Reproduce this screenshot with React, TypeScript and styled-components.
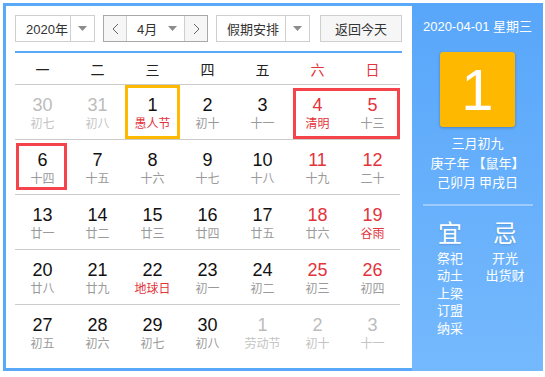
import { FC } from 'react';
import styled, { createGlobalStyle } from 'styled-components';

const GlobalStyle = createGlobalStyle`
  body {
    margin: 0;
    background: #fff;
    font-family: 'Liberation Sans', 'Noto Sans CJK SC', sans-serif;
  }
`;

type Kind = 'normal' | 'weekend' | 'other';
type Mark = 'none' | 'today' | 'restL' | 'restR' | 'rest';

interface Day {
  d: number;
  l: string;
  kind?: Kind;
  fest?: boolean;
  mark?: Mark;
}

const weeks: Day[][] = [
  [
    { d: 30, l: '初七', kind: 'other' },
    { d: 31, l: '初八', kind: 'other' },
    { d: 1, l: '愚人节', fest: true, mark: 'today' },
    { d: 2, l: '初十' },
    { d: 3, l: '十一' },
    { d: 4, l: '清明', kind: 'weekend', fest: true, mark: 'restL' },
    { d: 5, l: '十三', kind: 'weekend', mark: 'restR' },
  ],
  [
    { d: 6, l: '十四', mark: 'rest' },
    { d: 7, l: '十五' },
    { d: 8, l: '十六' },
    { d: 9, l: '十七' },
    { d: 10, l: '十八' },
    { d: 11, l: '十九', kind: 'weekend' },
    { d: 12, l: '二十', kind: 'weekend' },
  ],
  [
    { d: 13, l: '廿一' },
    { d: 14, l: '廿二' },
    { d: 15, l: '廿三' },
    { d: 16, l: '廿四' },
    { d: 17, l: '廿五' },
    { d: 18, l: '廿六', kind: 'weekend' },
    { d: 19, l: '谷雨', kind: 'weekend', fest: true },
  ],
  [
    { d: 20, l: '廿八' },
    { d: 21, l: '廿九' },
    { d: 22, l: '地球日', fest: true },
    { d: 23, l: '初一' },
    { d: 24, l: '初二' },
    { d: 25, l: '初三', kind: 'weekend' },
    { d: 26, l: '初四', kind: 'weekend' },
  ],
  [
    { d: 27, l: '初五' },
    { d: 28, l: '初六' },
    { d: 29, l: '初七' },
    { d: 30, l: '初八' },
    { d: 1, l: '劳动节', kind: 'other' },
    { d: 2, l: '初十', kind: 'other' },
    { d: 3, l: '十一', kind: 'other' },
  ],
];

const weekNames = ['一', '二', '三', '四', '五', '六', '日'];
const yiList = ['祭祀', '动土', '上梁', '订盟', '纳采'];
const jiList = ['开光', '出货财'];

const Caret: FC = () => (
  <svg width="9" height="5" viewBox="0 0 9 5">
    <path d="M0 0 L9 0 L4.5 5 Z" fill="#8c8c8c" />
  </svg>
);

const Chevron: FC<{ dir: 'l' | 'r' }> = ({ dir }) => (
  <svg width="7" height="12" viewBox="0 0 7 12">
    <path
      d={dir === 'l' ? 'M6 1 L1 6 L6 11' : 'M1 1 L6 6 L1 11'}
      fill="none"
      stroke="#666"
      strokeWidth="1"
    />
  </svg>
);

const App: FC = () => {
  return (
    <>
      <GlobalStyle />
      <Frame>
        <Main>
          <Toolbar>
            <Select width={80}>
              <SelectText>2020年</SelectText>
              <CaretBox>
                <Caret />
              </CaretBox>
            </Select>
            <MonthGroup>
              <NavButton>
                <Chevron dir="l" />
              </NavButton>
              <MonthSelect>
                <span>4月</span>
                <Caret />
              </MonthSelect>
              <NavButton>
                <Chevron dir="r" />
              </NavButton>
            </MonthGroup>
            <Select width={94}>
              <SelectText>假期安排</SelectText>
              <CaretBox>
                <Caret />
              </CaretBox>
            </Select>
            <TodayButton>返回今天</TodayButton>
          </Toolbar>
          <BlueLine />
          <Grid>
            <HeadRow>
              {weekNames.map((w, i) => (
                <HeadCell key={w} red={i >= 5}>
                  {w}
                </HeadCell>
              ))}
            </HeadRow>
            {weeks.map((week, wi) => (
              <WeekRow key={wi} last={wi === weeks.length - 1}>
                {week.map((day, di) => (
                  <DayCell key={di} mark={day.mark || 'none'}>
                    <DayNum kind={day.kind || 'normal'}>{day.d}</DayNum>
                    <Lunar
                      kind={day.kind || 'normal'}
                      fest={!!day.fest}
                    >
                      {day.l}
                    </Lunar>
                  </DayCell>
                ))}
              </WeekRow>
            ))}
          </Grid>
        </Main>
        <Side>
          <SideDate>2020-04-01 星期三</SideDate>
          <BigDay>1</BigDay>
          <SideInfo>
            <div>三月初九</div>
            <div>庚子年 【鼠年】</div>
            <div>己卯月 甲戌日</div>
          </SideInfo>
          <SideLine />
          <Advice>
            <AdviceCol>
              <AdviceTitle>宜</AdviceTitle>
              {yiList.map((t) => (
                <AdviceItem key={t}>{t}</AdviceItem>
              ))}
            </AdviceCol>
            <AdviceCol>
              <AdviceTitle>忌</AdviceTitle>
              {jiList.map((t) => (
                <AdviceItem key={t}>{t}</AdviceItem>
              ))}
            </AdviceCol>
          </Advice>
        </Side>
      </Frame>
    </>
  );
};

export default App;

const Frame = styled.div`
  margin: 3px 0 0 3px;
  width: 540px;
  height: 368px;
  display: flex;
`;

const Main = styled.div`
  width: 409px;
  flex-shrink: 0;
  box-sizing: border-box;
  border: 3px solid #5aa8f8;
  border-right: none;
  padding: 9px 0 0 9px;
`;

const Toolbar = styled.div`
  display: flex;
  height: 27px;
  font-size: 13px;
  color: #333;
  white-space: nowrap;
  font-family: 'Liberation Sans', 'Noto Sans CJK SC', sans-serif;
`;

const Select = styled.div<{ width: number }>`
  width: ${(p) => p.width}px;
  box-sizing: border-box;
  border: 1px solid #cfcfcf;
  display: flex;
  margin-right: 8px;
  background: #fff;
`;

const SelectText = styled.div`
  flex: 1;
  display: flex;
  align-items: center;
  padding-left: 10px;
  border-right: 1px solid #cfcfcf;
`;

const CaretBox = styled.div`
  width: 23px;
  flex-shrink: 0;
  display: flex;
  align-items: center;
  justify-content: center;
`;

const MonthGroup = styled.div`
  width: 105px;
  box-sizing: border-box;
  border: 1px solid #a8a8a8;
  display: flex;
  margin-right: 8px;
`;

const NavButton = styled.div`
  width: 22px;
  display: flex;
  align-items: center;
  justify-content: center;
  background: #f6f6f6;
`;

const MonthSelect = styled.div`
  flex: 1;
  display: flex;
  align-items: center;
  justify-content: space-between;
  padding: 0 7px 0 10px;
  border-left: 1px solid #cfcfcf;
  border-right: 1px solid #cfcfcf;
`;

const TodayButton = styled.div`
  width: 82px;
  margin-left: 2px;
  box-sizing: border-box;
  border: 1px solid #cfcfcf;
  background: #f6f6f6;
  display: flex;
  align-items: center;
  justify-content: center;
`;

const BlueLine = styled.div`
  width: 387px;
  height: 2px;
  margin-top: 9px;
  background: #5aa8f8;
`;

const Grid = styled.div`
  width: 385px;
  display: flex;
  flex-direction: column;
`;

const HeadRow = styled.div`
  display: flex;
  height: 31px;
  border-bottom: 1px solid #cccccc;
`;

const HeadCell = styled.div<{ red: boolean }>`
  flex: 1;
  display: flex;
  align-items: center;
  justify-content: center;
  font-family: 'Noto Sans CJK SC', sans-serif;
  font-size: 14px;
  color: ${(p) => (p.red ? '#e3333b' : '#222')};
`;

const WeekRow = styled.div<{ last: boolean }>`
  display: flex;
  height: 54px;
  border-bottom: 1px solid ${(p) => (p.last ? 'transparent' : '#cccccc')};
`;

const markBox: Record<Mark, string> = {
  none: 'display: none;',
  today: 'top: 0; left: 0; right: 0; bottom: 0; border: 3px solid #ffb900;',
  restL:
    'top: 3px; left: 3px; right: 0; bottom: 0; border: 3px solid #f4434a; border-right: none;',
  restR:
    'top: 3px; left: 0; right: 0; bottom: 0; border: 3px solid #f4434a; border-left: none;',
  rest: 'top: 3px; left: 1px; right: 3px; bottom: 4px; border: 3px solid #f4434a;',
};

const DayCell = styled.div<{ mark: Mark }>`
  flex: 1;
  position: relative;
  display: flex;
  flex-direction: column;
  align-items: center;
  padding-top: 10px;
  box-sizing: border-box;

  &::before {
    content: '';
    position: absolute;
    ${(p) => markBox[p.mark]}
  }
`;

const numColor: Record<Kind, string> = {
  normal: '#111',
  weekend: '#e3333b',
  other: '#bcbcbc',
};

const DayNum = styled.div<{ kind: Kind }>`
  font-family: 'Liberation Sans', sans-serif;
  font-size: 18px;
  line-height: 20px;
  color: ${(p) => numColor[p.kind]};
`;

const Lunar = styled.div<{ kind: Kind; fest: boolean }>`
  font-family: 'Noto Sans CJK SC', sans-serif;
  font-size: 12px;
  line-height: 15px;
  color: ${(p) =>
    p.kind === 'other' ? '#c4c4c4' : p.fest ? '#e3333b' : '#9a9a9a'};
`;

const Side = styled.div`
  flex: 1;
  background: linear-gradient(#58a6fa, #75b9fd);
  color: #fff;
  display: flex;
  flex-direction: column;
  align-items: center;
  font-family: 'Liberation Sans', 'Noto Sans CJK SC', sans-serif;
`;

const SideDate = styled.div`
  margin-top: 15px;
  font-size: 13px;
  line-height: 18px;
`;

const BigDay = styled.div`
  margin-top: 16px;
  width: 75px;
  height: 75px;
  border-radius: 3px;
  background: #ffb800;
  box-shadow: 0 1px 3px rgba(0, 0, 0, 0.25);
  display: flex;
  align-items: center;
  justify-content: center;
  font-family: 'Liberation Sans', sans-serif;
  font-size: 58px;
  color: #fff;
`;

const SideInfo = styled.div`
  margin-top: 6px;
  font-family: 'Noto Sans CJK SC', sans-serif;
  font-size: 13px;
  line-height: 19.5px;
  text-align: center;
`;

const SideLine = styled.div`
  width: 110px;
  height: 2px;
  margin-top: 12px;
  background: rgba(255, 255, 255, 0.35);
`;

const Advice = styled.div`
  display: flex;
  margin-top: 11px;
`;

const AdviceCol = styled.div`
  width: 55px;
  display: flex;
  flex-direction: column;
  align-items: center;
  font-family: 'Noto Sans CJK SC', sans-serif;
`;

const AdviceTitle = styled.div`
  font-size: 24px;
  line-height: 30px;
  margin-bottom: 2px;
  text-shadow: 0 1px 2px rgba(0, 0, 0, 0.15);
`;

const AdviceItem = styled.div`
  font-size: 13px;
  line-height: 17.5px;
`;
